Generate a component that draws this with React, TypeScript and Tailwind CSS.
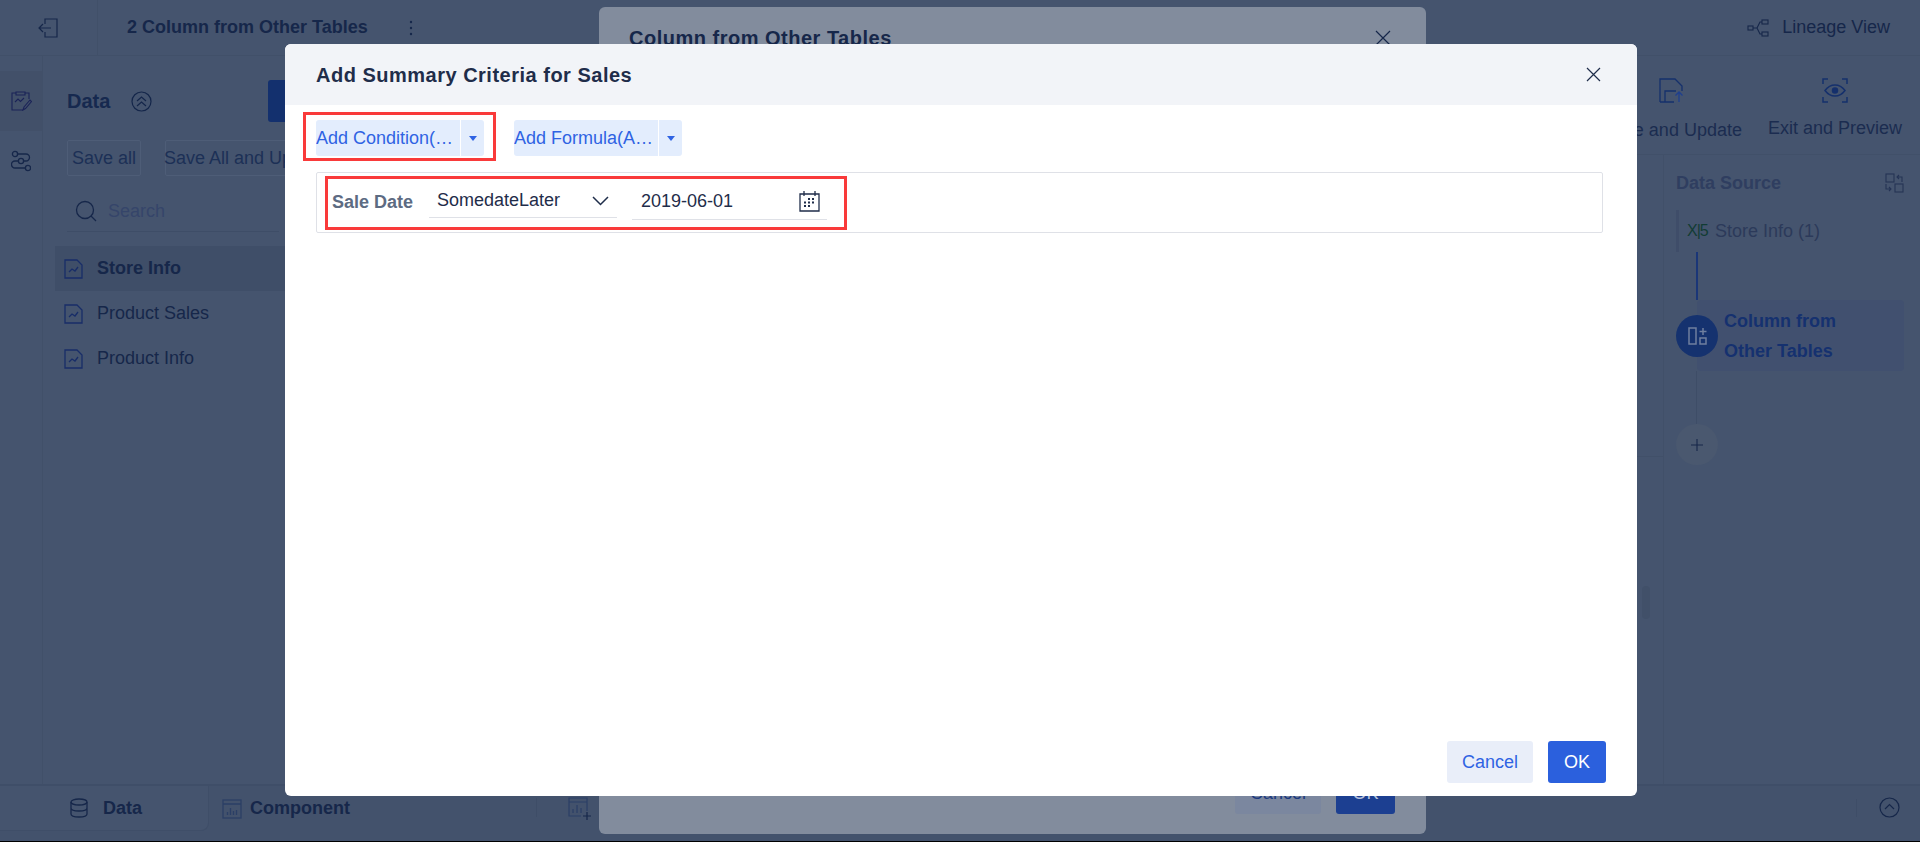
import React from "react";

const F = "font-['Liberation_Sans',Arial,sans-serif]";

function DocChart() {
  return (
    <svg width="19" height="20" viewBox="0 0 19 20" fill="none" stroke="#182d68" strokeWidth="1.3">
      <path d="M1 1h12l5 5v13H1z" />
      <path d="M5 13l3-3 3 2 3-4" />
    </svg>
  );
}

function ListRow({ label, active }: { label: string; active?: boolean }) {
  return (
    <div className={`ml-[12px] flex h-[45px] items-center pl-[9px] ${active ? "bg-[#3f4e68] font-bold" : ""}`}>
      <DocChart />
      <span className="ml-[14px] text-[18px] text-[#16274a]">{label}</span>
    </div>
  );
}

function SplitButton({ label, w }: { label: string; w: string }) {
  return (
    <div className={`flex h-9 ${w} items-center rounded-[3px] bg-[#e3edfd] text-[18px] text-[#2f63e3]`}>
      <span className="min-w-0 flex-1 truncate whitespace-nowrap">{label}</span>
      <span className="flex h-9 w-6 items-center justify-center border-l border-white">
        <svg width="8" height="5" viewBox="0 0 8 5" fill="#2f63e3"><path d="M0 0h8L4 5z" /></svg>
      </span>
    </div>
  );
}

export default function App() {
  return (
    <div className={`relative h-[842px] w-full overflow-hidden bg-[#45546e] ${F} text-[#16274a]`}>
      <div className="flex h-[841px] flex-col">
        {/* top bar */}
        <header className="flex h-[56px] shrink-0 items-center border-b border-[#415069]">
          <div className="flex h-full w-[98px] items-center justify-center border-r border-[#415069] pr-[1px]">
            <svg width="20" height="20" viewBox="0 0 20 20" fill="none" stroke="#16274a" strokeWidth="1.2">
              <path d="M7 6V1h12v18H7v-5" />
              <path d="M13 10H1M5 6l-4 4 4 4" />
            </svg>
          </div>
          <span className="ml-[29px] text-[18px] font-bold whitespace-nowrap text-[#16274a]">2 Column from Other Tables</span>
          <svg className="ml-[41px]" width="4" height="16" viewBox="0 0 4 16" fill="#16274a">
            <circle cx="2" cy="2" r="1.2" /><circle cx="2" cy="8" r="1.2" /><circle cx="2" cy="14" r="1.2" />
          </svg>
          <div className="ml-auto flex items-center pr-[30px]">
            <svg width="22" height="18" viewBox="0 0 22 18" fill="none" stroke="#16274a" strokeWidth="1.1">
              <rect x="1" y="7" width="5" height="4" /><rect x="15" y="1" width="6" height="4" /><rect x="15" y="13" width="6" height="4" />
              <path d="M6 9h4M15 3h-2l-3 6 3 6h2" />
            </svg>
            <span className="ml-[13px] text-[18px] text-[#16274a]">Lineage View</span>
          </div>
        </header>

        <div className="flex min-h-0 flex-1">
          {/* rail */}
          <aside className="w-[43px] shrink-0 border-r border-[#415069] pt-[15px]">
            <div className="flex h-[60px] items-center justify-center bg-[#425069]">
              <svg width="21" height="20" viewBox="0 0 21 20" fill="none" stroke="#1b2358" strokeWidth="1.1">
                <path d="M5 2H1v17h11M14 2h4v6" /><path d="M5 1h9v3H5z" />
                <path d="M4 11l3-3 2.500 2.500L13 7M12 19l1-3 6-7 1.500 1.500-6 7z" />
              </svg>
            </div>
            <div className="flex h-[60px] items-center justify-center">
              <svg width="20" height="22" viewBox="0 0 20 22" fill="none" stroke="#16274a" strokeWidth="1.3">
                <circle cx="4" cy="4" r="2.600" />
                <path d="M6.600 4H15a3.500 3.500 0 0 1 0 7h-2.400M7.400 11H4a3.500 3.500 0 0 0 0 7h10.400" />
                <circle cx="10" cy="11" r="2.600" />
                <circle cx="17" cy="18" r="2.600" />
              </svg>
            </div>
          </aside>

          {/* data panel */}
          <section className="w-[243px] shrink-0 overflow-hidden">
            <div className="mt-[24px] flex h-[42px] items-center pl-[24px]">
              <span className="text-[20px] font-bold text-[#16294f]">Data</span>
              <svg className="ml-[21px]" width="21" height="21" viewBox="0 0 21 21" fill="none" stroke="#14264a" strokeWidth="1.2">
                <circle cx="10.500" cy="10.500" r="9.500" /><path d="M6 10l4.500-4 4.500 4M6 15l4.500-4 4.500 4" />
              </svg>
              <div className="ml-auto h-[42px] w-[18px] rounded-l-[3px] bg-[#13306e]" />
            </div>
            <div className="mt-[18px] flex gap-6 pl-[24px] text-[18px] whitespace-nowrap text-[#1c3056]">
              <div className="flex h-9 w-[74px] shrink-0 items-center justify-center rounded-[2px] border border-[#4e5d77]">Save all</div>
              <div className="flex h-9 w-[200px] shrink-0 items-center rounded-[2px] border border-[#4e5d77]">
                <span className="-ml-[2px]">Save All and Update</span>
              </div>
            </div>
            <div className="ml-[24px] mt-[20px] flex h-[36px] w-[212px] items-center border-b border-[#3e4d67] pb-[5px] pl-[8px]">
              <svg width="22" height="22" viewBox="0 0 22 22" fill="none" stroke="#16274a" strokeWidth="1.3">
                <circle cx="10" cy="10" r="8.500" /><path d="M16 16l5 5" />
              </svg>
              <span className="ml-[11px] text-[18px] text-[#35456a]">Search</span>
            </div>
            <div className="mt-[14px]">
              <ListRow label="Store Info" active />
              <ListRow label="Product Sales" />
              <ListRow label="Product Info" />
            </div>
          </section>

          {/* center (behind dialogs) */}
          <main className="min-w-0 flex-1" />

          {/* right tools */}
          <div className="flex w-[283px] shrink-0 flex-col">
            <div className="flex h-[99px] shrink-0 border-b border-[#415069]" />
            <div className="flex min-h-0 flex-1">
              <div className="w-[27px] shrink-0 border-r border-[#415069]">
                <div className="mt-[301px] border-t border-[#415069]" />
                <div className="ml-[5px] mt-[129px] h-[33px] w-[8px] rounded-[4px] bg-[#415069]" />
              </div>
              <aside className="min-w-0 flex-1 pl-[12px] pr-[16px] pt-[15px]">
                <div className="flex h-[26px] items-center justify-between">
                  <span className="text-[18px] font-bold text-[#2f3e60]">Data Source</span>
                  <svg width="19" height="20" viewBox="0 0 19 20" fill="none" stroke="#253455" strokeWidth="1.1">
                    <rect x="1" y="1" width="8" height="8" /><rect x="10" y="11" width="8" height="8" />
                    <path d="M17 9V4h-5M14 2l-2 2 2 2M1 11v5h5M4 14l2 2-2 2" />
                  </svg>
                </div>
                <div className="mt-[14px] flex h-[42px] items-center border-l-[3px] border-[#3f4d69] pl-[8px]">
                  <span className="w-[20px] text-[16px] font-medium tracking-[-1px] text-[#123c34]">X|5</span>
                  <span className="ml-[8px] text-[18px] text-[#2c3a5a]">Store Info (1)</span>
                </div>
                <div className="ml-[20px] h-[48px] w-[2px] bg-[#1a3678]" />
                <div className="relative flex h-[71px] items-center">
                  <div className="ml-[21px] flex h-[71px] flex-1 items-center rounded-[4px] bg-[#41506f] pl-[27px] text-[18px] leading-[30px] font-bold text-[#15316f]">
                    <span>Column from<br />Other Tables</span>
                  </div>
                  <div className="absolute left-0 top-[15px] flex h-[42px] w-[42px] items-center justify-center rounded-full bg-[#15326f]">
                    <svg width="21" height="20" viewBox="0 0 21 20" fill="none" stroke="#6f7f9f" strokeWidth="1.500">
                      <rect x="2" y="2" width="7" height="16" /><rect x="13" y="12" width="6" height="6" /><path d="M16 2v7M12.500 5.500h7" />
                    </svg>
                  </div>
                </div>
                <div className="ml-[20px] h-[53px] w-[1px] bg-[#3e4d67]" />
                <div className="flex h-[41px] w-[42px] items-center justify-center rounded-full bg-[#4a586f]">
                  <svg width="14" height="14" viewBox="0 0 14 14" stroke="#16274a" strokeWidth="1.1"><path d="M7 1v12M1 7h12" /></svg>
                </div>
              </aside>
            </div>
          </div>
        </div>

        {/* bottom */}
        <footer className="flex h-[57px] shrink-0 border-t-2 border-[#3f4e68] bg-[#43526c]">
          <div className="flex h-[45px] w-[209px] items-center rounded-br-[8px] border-r border-b border-[#3f4e68] bg-[#45546e] pl-[70px]">
            <svg width="18" height="20" viewBox="0 0 18 20" fill="none" stroke="#16274a" strokeWidth="1.3">
              <ellipse cx="9" cy="4" rx="8" ry="3" /><path d="M1 4v12c0 1.700 3.500 3 8 3s8-1.300 8-3V4M1 10c0 1.700 3.500 3 8 3s8-1.300 8-3" />
            </svg>
            <span className="ml-[15px] text-[18px] font-bold text-[#16274a]">Data</span>
          </div>
          <div className="flex h-[45px] items-center pl-[13px]">
            <svg width="20" height="20" viewBox="0 0 20 20" fill="none" stroke="#2b3f66" strokeWidth="1.3">
              <rect x="1" y="1" width="18" height="18" /><path d="M1 5h18M5.500 16v-3M8.500 16V9M11.500 16v-4M14.500 16v-5" />
            </svg>
            <span className="ml-[8px] text-[18px] font-bold text-[#16274a]">Component</span>
          </div>
          <div className="ml-[186px] mt-[12px] h-[19px] w-px bg-[#3e4d67]" />
          <svg className="ml-[31px] mt-[11px]" width="24" height="24" viewBox="0 0 24 24" fill="none" stroke="#2b3f66" strokeWidth="1.2">
            <path d="M19 14V1H1v18h12M1 5h18M5 16v-4M9 16V8M13 16v-5" /><path d="M15 19h8M19 15v8" stroke="#16274a" />
          </svg>
          <div className="ml-auto mr-[20px] mt-[11px] flex items-center gap-[22px] self-start">
            <div className="h-[18px] w-px bg-[#3e4d67]" />
            <svg width="21" height="21" viewBox="0 0 21 21" fill="none" stroke="#16274a" strokeWidth="1.2">
              <circle cx="10.500" cy="10.500" r="9.500" /><path d="M6 12l4.500-4.500L15 12" />
            </svg>
          </div>
        </footer>
      </div>
      <div className="h-px bg-black" />

      {/* toolbar items to the right of the dialog */}
      <div className="absolute right-[18px] top-[78px] flex items-start gap-[26px] text-[18px] text-[#1b2c50]">
        <div className="flex flex-col items-center">
          <svg width="26" height="25" viewBox="0 0 26 25" fill="none" stroke="#15306c" strokeWidth="1.3">
            <path d="M1 24V1h15l7 7v5M1 24h14M6 24V13h11" />
            <path d="M20 24V14M16.500 17.500l3.500-3.500 3.500 3.500" stroke="#1e3f8f" />
          </svg>
          <span className="mt-[14px] whitespace-nowrap">Save and Update</span>
        </div>
        <div className="flex flex-col items-center">
          <svg width="26" height="25" viewBox="0 0 26 25" fill="none" stroke="#15306c" strokeWidth="1.500">
            <path d="M1 6V1h5M20 1h5v5M1 19v5h5M25 19v5h-5" />
            <path d="M3 12.500C6 8.500 9.500 7 13 7s7 1.500 10 5.500c-3 4-6.500 5.500-10 5.500s-7-1.500-10-5.500z" />
            <circle cx="13" cy="12.500" r="2.500" fill="#15306c" />
          </svg>
          <span className="mt-[12px] whitespace-nowrap">Exit and Preview</span>
        </div>
      </div>

      {/* rear dialog */}
      <div className="absolute left-[599px] top-[7px] flex h-[827px] w-[827px] flex-col rounded-[6px] bg-[#828c9d] px-[30px]">
        <div className="flex h-[62px] shrink-0 items-center justify-between">
          <span className="text-[20px] font-bold tracking-[0.5px] text-[#16274a]">Column from Other Tables</span>
          <svg className="mr-[5px]" width="16" height="16" viewBox="0 0 16 16" stroke="#16274a" strokeWidth="1.2"><path d="M1 1l14 14M15 1L1 15" /></svg>
        </div>
        <div className="flex-1" />
        <div className="mb-[20px] mr-[1px] flex justify-end gap-[15px] text-[18px]">
          <div className="flex h-[42px] w-[86px] items-center justify-center rounded-[3px] bg-[#7b879f] text-[#1c3a7e]">Cancel</div>
          <div className="flex h-[42px] w-[59px] items-center justify-center rounded-[3px] bg-[#1c3f91] text-white/70">OK</div>
        </div>
      </div>

      {/* front dialog */}
      <div className="absolute left-[285px] top-[44px] flex h-[752px] w-[1352px] flex-col overflow-hidden rounded-[6px] bg-white">
        <div className="flex h-[61px] shrink-0 items-center justify-between bg-[#f2f4f8] pl-[31px] pr-[36px]">
          <span className="text-[20px] font-bold tracking-[0.5px] whitespace-nowrap text-[#1f2d4a]">Add Summary Criteria for Sales</span>
          <svg width="15" height="15" viewBox="0 0 15 15" stroke="#1f2d4a" strokeWidth="1.2"><path d="M1 1l13 13M14 1L1 14" /></svg>
        </div>
        <div className="flex gap-[30px] pl-[31px] pt-[15px]">
          <div className="relative">
            <SplitButton label="Add Condition(AND)" w="w-[168px]" />
            <div className="absolute -bottom-[5px] -left-[13px] -right-[12px] -top-[8px] border-[3px] border-[#f93a3a]" />
          </div>
          <SplitButton label="Add Formula(AND)" w="w-[168px]" />
        </div>
        <div className="relative ml-[31px] mr-[34px] mt-[16px] flex h-[61px] items-center rounded-[2px] border border-[#dfe1e7] pl-[15px]">
          <div className="absolute left-[8px] top-[3px] h-[54px] w-[522px] border-[3px] border-[#f93a3a]" />
          <span className="w-[97px] text-[18px] font-bold text-[#5d6b82]">Sale Date</span>
          <div className="-mt-[5px] flex h-[36px] w-[188px] items-center justify-between border-b border-[#dfe1e7] pl-[8px] pr-[8px] pt-[2px] text-[18px] text-[#1f2d4a]">
            <span>SomedateLater</span>
            <svg width="17" height="10" viewBox="0 0 17 10" fill="none" stroke="#1f2d4a" strokeWidth="1.500"><path d="M1 1l7.500 7.500L16 1" /></svg>
          </div>
          <div className="-mt-[1px] ml-[15px] flex h-[36px] w-[195px] items-center justify-between border-b border-[#dfe1e7] pl-[9px] pr-[7px] text-[18px] text-[#1f2d4a]">
            <span>2019-06-01</span>
            <svg width="21" height="21" viewBox="0 0 21 21" fill="none" stroke="#1f2d4a" strokeWidth="1.300">
              <path d="M1 3h19v17H1zM5 0v5M16 0v5" />
              <path d="M9 8h2M13 8h2M5 11.500h2M9 11.500h2M13 11.500h2M5 15h2M9 15h2" strokeWidth="2" />
            </svg>
          </div>
        </div>
        <div className="flex-1" />
        <div className="mb-[13px] mr-[31px] flex justify-end gap-[15px] text-[18px]">
          <button className="flex h-[42px] w-[86px] items-center justify-center rounded-[3px] bg-[#e9eef9] text-[#2f63e3]">Cancel</button>
          <button className="flex h-[42px] w-[58px] items-center justify-center rounded-[3px] bg-[#2b60dd] text-white">OK</button>
        </div>
      </div>
    </div>
  );
}
